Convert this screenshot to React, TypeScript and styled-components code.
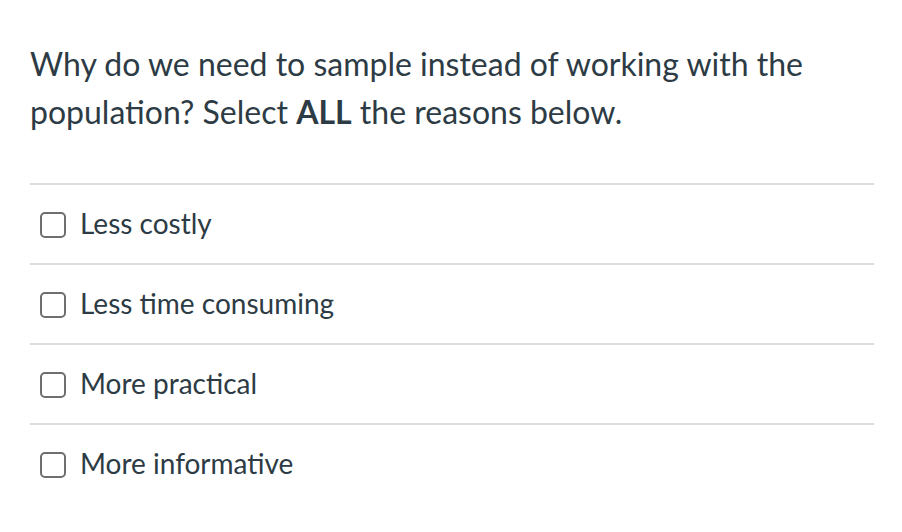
import * as React from 'react';
import styled, { createGlobalStyle } from 'styled-components';

const GlobalStyle = createGlobalStyle`
  html, body {
    margin: 0;
    padding: 0;
    background: #ffffff;
  }
  body {
    font-family: Lato, "Noto Sans", sans-serif;
    color: #2d3b45;
  }
`

const Page = styled.div`
  width: 902px;
  height: 532px;
  box-sizing: border-box;
  padding: 40px 28px 0 30px;
  background: #ffffff;
`

const Question = styled.p`
  margin: 0 0 47px 0;
  font-size: 32px;
  line-height: 48px;
  color: #2d3b45;

  strong {
    font-weight: 700;
  }
`

const AnswerList = styled.div`
  display: flex;
  flex-direction: column;
`

const AnswerRow = styled.label`
  display: flex;
  align-items: center;
  gap: 14px;
  height: 80px;
  box-sizing: border-box;
  border-top: 2px solid #dddddd;
  padding-left: 10px;
  padding-bottom: 2px;
  font-size: 28px;
  color: #2d3b45;
  cursor: pointer;
`

const Box = styled.span`
  width: 26px;
  height: 26px;
  margin-top: 4px;
  box-sizing: border-box;
  border: 2px solid #6f6f6f;
  border-radius: 5px;
  background: #ffffff;
  flex-shrink: 0;
`

const answers = ['Less costly', 'Less time consuming', 'More practical', 'More informative']

export default function App() {
  return <>
    <GlobalStyle />
    <Page>
      <Question>
        Why do we need to sample instead of working with the population? Select <strong>ALL</strong> the reasons below.
      </Question>
      <AnswerList>
        {answers.map(a => (
          <AnswerRow key={a}>
            <Box />
            <span>{a}</span>
          </AnswerRow>
        ))}
      </AnswerList>
    </Page>
  </>
}
